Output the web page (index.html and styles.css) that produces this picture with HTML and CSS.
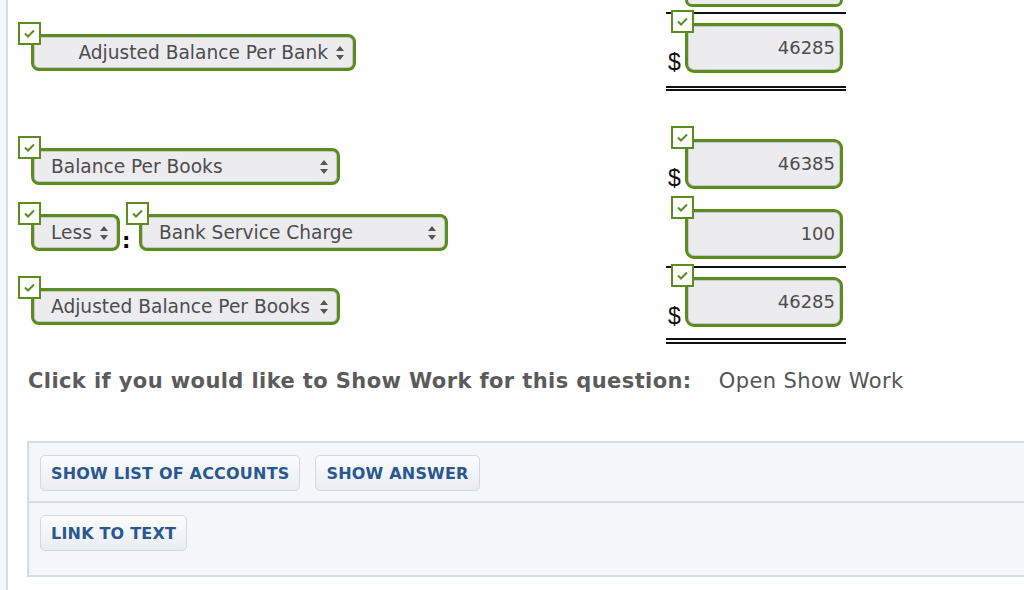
FILE: index.html
```html
<html>
<head>
    <link rel="stylesheet" href="styles.css">
</head>
<body>
    <div class="page">
        <div class="rail"></div>
        <div class="content">
            <div class="recon">
                <div class="labels">
                    <div class="field-row bank-total">
                        <div class="picker picker-wide">
                            <span class="tick"><svg viewBox="0 0 19 19" width="19" height="19"><path d="M5 9.5 L8 12.5 L14 6.5" fill="none" stroke="#5b8c1e" stroke-width="2"/></svg></span>
                            <span class="value value-right">Adjusted Balance Per Bank</span>
                            <svg class="arrows" viewBox="0 0 8 14" width="8" height="14"><path d="M4 0 L8 5 L0 5 Z M0 9 L8 9 L4 14 Z" fill="#555"/></svg>
                        </div>
                    </div>

                    <div class="field-row books-balance">
                        <div class="picker picker-long">
                            <span class="tick"><svg viewBox="0 0 19 19" width="19" height="19"><path d="M5 9.5 L8 12.5 L14 6.5" fill="none" stroke="#5b8c1e" stroke-width="2"/></svg></span>
                            <span class="value">Balance Per Books</span>
                            <svg class="arrows" viewBox="0 0 8 14" width="8" height="14"><path d="M4 0 L8 5 L0 5 Z M0 9 L8 9 L4 14 Z" fill="#555"/></svg>
                        </div>
                    </div>

                    <div class="field-row service-charge">
                        <div class="picker picker-short">
                            <span class="tick"><svg viewBox="0 0 19 19" width="19" height="19"><path d="M5 9.5 L8 12.5 L14 6.5" fill="none" stroke="#5b8c1e" stroke-width="2"/></svg></span>
                            <span class="value">Less</span>
                            <svg class="arrows" viewBox="0 0 8 14" width="8" height="14"><path d="M4 0 L8 5 L0 5 Z M0 9 L8 9 L4 14 Z" fill="#555"/></svg>
                        </div>
                        <span class="colon">:</span>
                        <div class="picker picker-long">
                            <span class="tick"><svg viewBox="0 0 19 19" width="19" height="19"><path d="M5 9.5 L8 12.5 L14 6.5" fill="none" stroke="#5b8c1e" stroke-width="2"/></svg></span>
                            <span class="value">Bank Service Charge</span>
                            <svg class="arrows" viewBox="0 0 8 14" width="8" height="14"><path d="M4 0 L8 5 L0 5 Z M0 9 L8 9 L4 14 Z" fill="#555"/></svg>
                        </div>
                    </div>

                    <div class="field-row books-total">
                        <div class="picker picker-long">
                            <span class="tick"><svg viewBox="0 0 19 19" width="19" height="19"><path d="M5 9.5 L8 12.5 L14 6.5" fill="none" stroke="#5b8c1e" stroke-width="2"/></svg></span>
                            <span class="value">Adjusted Balance Per Books</span>
                            <svg class="arrows" viewBox="0 0 8 14" width="8" height="14"><path d="M4 0 L8 5 L0 5 Z M0 9 L8 9 L4 14 Z" fill="#555"/></svg>
                        </div>
                    </div>
                </div>

                <div class="amounts">
                    <div class="stub"></div>
                    <div class="rule"></div>
                    <div class="amount-row first">
                        <span class="dollar">$</span>
                        <div class="amount">
                            <span class="tick"><svg viewBox="0 0 19 19" width="19" height="19"><path d="M5 9.5 L8 12.5 L14 6.5" fill="none" stroke="#5b8c1e" stroke-width="2"/></svg></span>
                            46285
                        </div>
                    </div>
                    <div class="rule double"></div>

                    <div class="amount-row books">
                        <span class="dollar">$</span>
                        <div class="amount">
                            <span class="tick"><svg viewBox="0 0 19 19" width="19" height="19"><path d="M5 9.5 L8 12.5 L14 6.5" fill="none" stroke="#5b8c1e" stroke-width="2"/></svg></span>
                            46385
                        </div>
                    </div>
                    <div class="amount-row charge">
                        <span class="dollar"></span>
                        <div class="amount">
                            <span class="tick"><svg viewBox="0 0 19 19" width="19" height="19"><path d="M5 9.5 L8 12.5 L14 6.5" fill="none" stroke="#5b8c1e" stroke-width="2"/></svg></span>
                            100
                        </div>
                    </div>
                    <div class="rule sub"></div>
                    <div class="amount-row total">
                        <span class="dollar">$</span>
                        <div class="amount">
                            <span class="tick"><svg viewBox="0 0 19 19" width="19" height="19"><path d="M5 9.5 L8 12.5 L14 6.5" fill="none" stroke="#5b8c1e" stroke-width="2"/></svg></span>
                            46285
                        </div>
                    </div>
                    <div class="rule double last"></div>
                </div>
            </div>

            <p class="show-work">
                <b>Click if you would like to Show Work for this question:</b>
                <a class="open-work">Open Show Work</a>
            </p>

            <div class="tools">
                <div class="tool-row">
                    <button class="tool-btn">SHOW LIST OF ACCOUNTS</button>
                    <button class="tool-btn">SHOW ANSWER</button>
                </div>
                <div class="tool-row last">
                    <button class="tool-btn">LINK TO TEXT</button>
                </div>
            </div>
        </div>
    </div>
</body>
</html>
```

FILE: styles.css
```css
body {
    margin: 0;
    background-color: #fff;
    font-family: "DejaVu Sans", Verdana, sans-serif;
    overflow: hidden;
}
.page {
    display: flex;
    min-height: 590px;
}
.rail {
    flex: none;
    width: 6px;
    background-color: #f3f6fa;
    border-right: 2px solid #d3dce6;
}
.content {
    flex: 1;
    padding-left: 19px;
}

/* reconciliation grid: labels on the left, amounts at the right */
.recon {
    display: grid;
    grid-template-columns: 635px 180px;
    margin-left: 4px;
}
.labels {
    display: flex;
    flex-direction: column;
    align-items: flex-start;
}
.field-row {
    display: flex;
    align-items: flex-end;
}
.bank-total { margin-top: 34px; }
.books-balance { margin-top: 77px; }
.service-charge { margin-top: 29px; }
.books-total { margin-top: 37px; }

.picker {
    position: relative;
    box-sizing: border-box;
    height: 37px;
    display: flex;
    align-items: center;
    gap: 8px;
    padding: 0 9px 0 17px;
    border: 3px solid #5b8c1e;
    border-radius: 8px;
    background-color: #ececef;
    box-shadow: inset 0 0 0 1px #c9c9cc;
    font-size: 18.6px;
    color: #4d4d4d;
}
.picker-wide { width: 325px; }
.picker-long { width: 309px; }
.picker-short { width: 89px; }
.value {
    flex: 1;
    white-space: nowrap;
}
.value-right {
    text-align: right;
}
.arrows {
    flex: none;
}
.colon {
    width: 19px;
    padding-left: 2px;
    box-sizing: border-box;
    font-size: 21px;
    font-weight: bold;
    line-height: 20px;
    color: #000;
}

.tick {
    position: absolute;
    left: -16px;
    top: -15px;
    width: 23px;
    height: 23px;
    box-sizing: border-box;
    border: 2px solid #5b8c1e;
    background-color: #fff;
}
.tick svg {
    display: block;
}

.amounts {
    display: flex;
    flex-direction: column;
}
.stub {
    margin-left: 19px;
    width: 158px;
    height: 7px;
    box-sizing: border-box;
    border: 3px solid #5b8c1e;
    border-top: none;
    border-radius: 0 0 9px 9px;
    background-color: #ececef;
}
.rule {
    margin-top: 5px;
    border-top: 2px solid #111;
}
.rule.double {
    margin-top: 13px;
    height: 1px;
    border-bottom: 2px solid #111;
}
.rule.sub { margin-top: 7px; }
.rule.last {
    margin-top: 11px;
    height: 2px;
}
.amount-row {
    display: flex;
    align-items: flex-end;
}
.amount-row.first { margin-top: 9px; }
.amount-row.books { margin-top: 48px; }
.amount-row.charge { margin-top: 20px; }
.amount-row.total { margin-top: 9px; }
.dollar {
    width: 19px;
    padding-left: 2px;
    box-sizing: border-box;
    font-family: "Liberation Sans", Arial, sans-serif;
    font-size: 23px;
    line-height: 22px;
    color: #111;
}
.amount {
    position: relative;
    box-sizing: border-box;
    width: 158px;
    height: 50px;
    display: flex;
    align-items: center;
    justify-content: flex-end;
    padding-right: 5px;
    padding-bottom: 2px;
    border: 3px solid #5b8c1e;
    border-radius: 9px;
    background-color: #ececef;
    box-shadow: inset 0 0 0 1px #c9c9cc;
    font-size: 18px;
    color: #4d4d4d;
}
.amount .tick {
    left: -17px;
    top: -16px;
}

.show-work {
    margin: 25px 0 0 1px;
    font-size: 21px;
    letter-spacing: 0.4px;
    line-height: 25px;
    color: #5b5b5b;
}
.open-work {
    margin-left: 20px;
    font-weight: normal;
    color: #555;
}

.tools {
    margin-top: 47px;
    margin-right: -10px;
    border: 2px solid #d3dce7;
    background-color: #f4f7fa;
}
.tool-row {
    display: flex;
    gap: 15px;
    padding: 12px 11px 10px;
    border-bottom: 2px solid #d3dce7;
}
.tool-row.last {
    padding-bottom: 24px;
    border-bottom: none;
}
.tool-btn {
    height: 36px;
    padding: 0 10px;
    border: 1px solid #d0d8e1;
    border-radius: 5px;
    background: linear-gradient(#fbfcfd, #e8edf2);
    font-family: "DejaVu Sans", Verdana, sans-serif;
    font-size: 16px;
    letter-spacing: 0.2px;
    font-weight: bold;
    color: #2b5790;
    cursor: pointer;
}
```
